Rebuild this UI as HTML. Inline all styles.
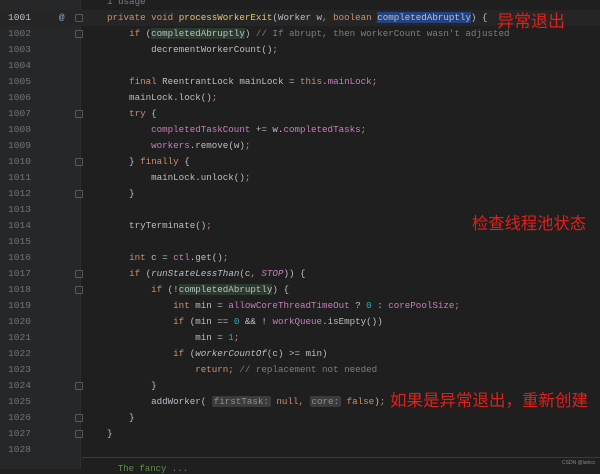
<!DOCTYPE html><html><head><meta charset="utf-8"><style>
body{margin:0;width:600px;height:469px;overflow:hidden;background:#1f1f1f;font-family:"Liberation Mono",monospace;font-size:9.2px;position:relative}
.g{position:absolute;left:0;top:0;width:80px;height:469px;background:#262729}
.vl{position:absolute;left:80px;top:0;width:1px;height:469px;background:#2c2d2f}
.l{position:absolute;left:0;width:600px;height:16px;line-height:16px;white-space:pre;color:#bcbec4}
.n{position:absolute;left:8px;color:#6f737a;font-size:9.6px}
.c{position:absolute;left:107px}
.k{color:#cf8e6d}.y{color:#e8c06d}.p{color:#c77dbb}.cm{color:#7a7e85}.nu{color:#2aacb8}.i{font-style:italic}
.h{background:#3a3b3d;color:#8c8f94;border-radius:2px;padding:0 2px}
.zh{position:absolute;color:#e0201b;font-family:"Noto Sans CJK SC",sans-serif;white-space:nowrap}
.fold{position:absolute;left:75px;width:6px;height:6px;border:1px solid #55575a;border-radius:1px}
</style></head><body>
<div class="g"></div><div class="vl"></div>
<div class="l" style="top:10px;background:#252526"></div>
<div class="l" style="top:-6px"><span class="c cm">1 usage</span></div>
<div class="l" style="top:10px"><span class="n" style="color:#bcbec4">1001</span><span style="position:absolute;left:59px;color:#8fa7c9">@</span><span class="c"><span class="k">private void </span><span class="y">processWorkerExit</span>(Worker w<span class="k">, boolean </span><span style="background:#214283">completedAbruptly</span>) {</span></div>
<div class="l" style="top:26px"><span class="n">1002</span><span class="c">    <span class="k">if</span> (<span style="background:#2b3a2e">completedAbruptly</span>) <span class="cm">// If abrupt, then workerCount wasn't adjusted</span></span></div>
<div class="l" style="top:42px"><span class="n">1003</span><span class="c">        decrementWorkerCount()<span class="k">;</span></span></div>
<div class="l" style="top:58px"><span class="n">1004</span></div>
<div class="l" style="top:74px"><span class="n">1005</span><span class="c">    <span class="k">final </span>ReentrantLock mainLock = <span class="k">this</span>.<span class="p">mainLock</span><span class="k">;</span></span></div>
<div class="l" style="top:90px"><span class="n">1006</span><span class="c">    mainLock.lock()<span class="k">;</span></span></div>
<div class="l" style="top:106px"><span class="n">1007</span><span class="c">    <span class="k">try</span> {</span></div>
<div class="l" style="top:122px"><span class="n">1008</span><span class="c">        <span class="p">completedTaskCount</span> += w.<span class="p">completedTasks</span><span class="k">;</span></span></div>
<div class="l" style="top:138px"><span class="n">1009</span><span class="c">        <span class="p">workers</span>.remove(w)<span class="k">;</span></span></div>
<div class="l" style="top:154px"><span class="n">1010</span><span class="c">    } <span class="k">finally</span> {</span></div>
<div class="l" style="top:170px"><span class="n">1011</span><span class="c">        mainLock.unlock()<span class="k">;</span></span></div>
<div class="l" style="top:186px"><span class="n">1012</span><span class="c">    }</span></div>
<div class="l" style="top:202px"><span class="n">1013</span></div>
<div class="l" style="top:218px"><span class="n">1014</span><span class="c">    tryTerminate()<span class="k">;</span></span></div>
<div class="l" style="top:234px"><span class="n">1015</span></div>
<div class="l" style="top:250px"><span class="n">1016</span><span class="c">    <span class="k">int </span>c = <span class="p">ctl</span>.get()<span class="k">;</span></span></div>
<div class="l" style="top:266px"><span class="n">1017</span><span class="c">    <span class="k">if</span> (<span class="i">runStateLessThan</span>(c<span class="k">, </span><span class="p i">STOP</span>)) {</span></div>
<div class="l" style="top:282px"><span class="n">1018</span><span class="c">        <span class="k">if</span> (!<span style="background:#2b3a2e">completedAbruptly</span>) {</span></div>
<div class="l" style="top:298px"><span class="n">1019</span><span class="c">            <span class="k">int </span>min = <span class="p">allowCoreThreadTimeOut</span> ? <span class="nu">0</span> : <span class="p">corePoolSize</span><span class="k">;</span></span></div>
<div class="l" style="top:314px"><span class="n">1020</span><span class="c">            <span class="k">if</span> (min == <span class="nu">0</span> &amp;&amp; ! <span class="p">workQueue</span>.isEmpty())</span></div>
<div class="l" style="top:330px"><span class="n">1021</span><span class="c">                min = <span class="nu">1</span><span class="k">;</span></span></div>
<div class="l" style="top:346px"><span class="n">1022</span><span class="c">            <span class="k">if</span> (<span class="i">workerCountOf</span>(c) &gt;= min)</span></div>
<div class="l" style="top:362px"><span class="n">1023</span><span class="c">                <span class="k">return;</span> <span class="cm">// replacement not needed</span></span></div>
<div class="l" style="top:378px"><span class="n">1024</span><span class="c">        }</span></div>
<div class="l" style="top:394px"><span class="n">1025</span><span class="c">        addWorker( <span class="h">firstTask:</span> <span class="k">null, </span><span class="h">core:</span> <span class="k">false</span>)<span class="k">;</span></span></div>
<div class="l" style="top:410px"><span class="n">1026</span><span class="c">    }</span></div>
<div class="l" style="top:426px"><span class="n">1027</span><span class="c">}</span></div>
<div class="l" style="top:442px"><span class="n">1028</span></div>
<div class="fold" style="top:14px"></div><div class="fold" style="top:30px"></div><div class="fold" style="top:110px"></div><div class="fold" style="top:158px"></div><div class="fold" style="top:190px"></div><div class="fold" style="top:270px"></div><div class="fold" style="top:286px"></div><div class="fold" style="top:382px"></div><div class="fold" style="top:414px"></div><div class="fold" style="top:430px"></div>
<div style="position:absolute;left:82px;top:457px;width:518px;height:1px;background:#3a3b3d"></div>
<div style="position:absolute;left:107px;top:464px;font-size:9px;color:#5f8c4a;white-space:pre">  The fancy ...</div>
<div style="position:absolute;left:562px;top:460px;font-size:5px;color:#888;font-family:'Liberation Sans',sans-serif">CSDN @lanicc</div>
<div class="zh" style="left:497px;top:7px;font-size:17px">异常退出</div>
<div class="zh" style="left:472px;top:210px;font-size:16.3px">检查线程池状态</div>
<div class="zh" style="left:390px;top:387px;font-size:16.5px">如果是异常退出，重新创建</div>
</body></html>
